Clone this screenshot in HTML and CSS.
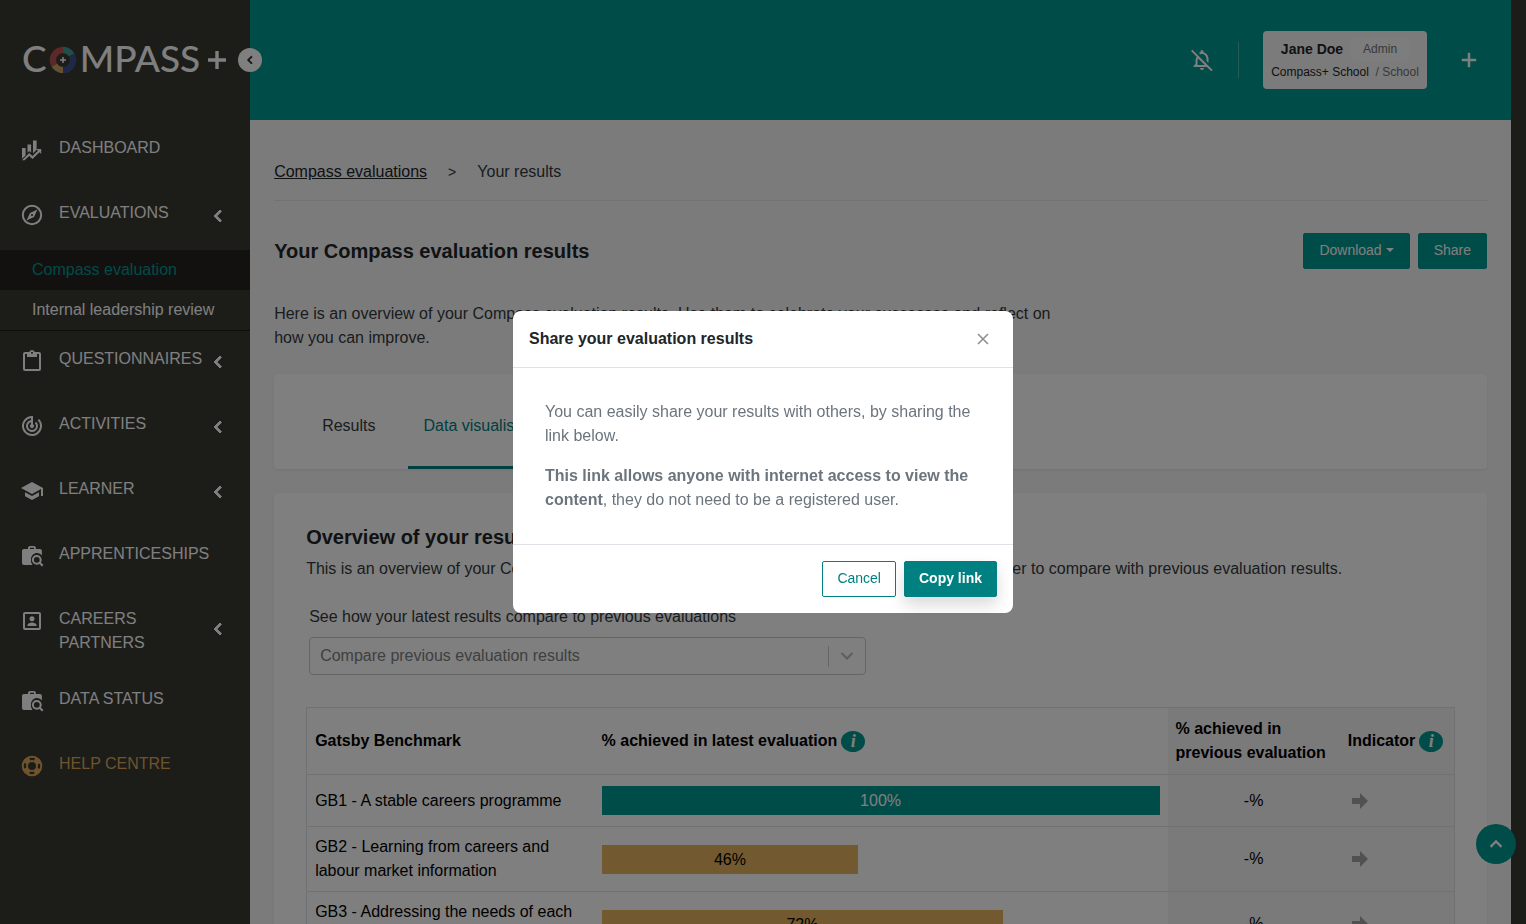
FILE: index.html
```html
<!DOCTYPE html>
<html lang="en">
<head>
    <meta charset="UTF-8">
    <meta name="viewport" content="width=device-width, initial-scale=1.0">
    <title>Compass+ | Your results</title>
    <link rel="stylesheet" href="styles.css">
</head>
<body class="modal-open">

    <!-- icons used more than once -->
    <svg class="sprite" aria-hidden="true">
        <symbol id="icon-chevron" viewBox="0 0 24 24"><path d="M15.4 7.4 14 6l-6 6 6 6 1.4-1.4L10.8 12z"/></symbol>
        <symbol id="icon-case" viewBox="0 0 24 24"><path d="M11 15c0-3.3 2.7-6 6-6 2 0 3.800 1 4.900 2.500V7c0-1.100-.9-2-2-2h-4V4c0-1.100-.9-2-2-2H10C8.900 2 8 2.900 8 4v1H4C2.900 5 2 5.900 2 7v12c0 1.100.9 2 2 2h8.500A6.500 6.500 0 0 1 11 15zM10 3.800h4V5h-4z"/><path d="M20.900 18.500a4.900 4.900 0 1 0-1.500 1.500l2.600 2.600 1.500-1.500zM16.800 18.700a2.900 2.900 0 1 1 0-5.800 2.900 2.900 0 0 1 0 5.800z"/></symbol>
        <symbol id="icon-arrow" viewBox="0 0 16 16"><path d="M0 5h8V0l8 8-8 8v-5H0z"/></symbol>
    </svg>

    <aside class="sidebar">
        <div class="logo">
            <span>C</span>
            <svg class="logo-ring" viewBox="0 0 28 28" fill="none" stroke-width="6.500">
                <path d="M14 4a10 10 0 0 1 8.700 5" stroke="#3f9c97"/>
                <path d="M22.700 9A10 10 0 0 1 14 24" stroke="#3f5088"/>
                <path d="M14 24A10 10 0 0 1 5.300 19" stroke="#c9a064"/>
                <path d="M5.300 19A10 10 0 0 1 14 4" stroke="#b45250"/>
                <path d="M14 11v6M11 14h6" stroke="#fff" stroke-width="1.500"/>
            </svg>
            <span>MPASS</span>
            <svg class="logo-plus" viewBox="0 0 18 18"><path d="M7.300 0h3.400v7.300H18v3.400h-7.300V18H7.300v-7.300H0V7.300h7.300z"/></svg>
        </div>
        <button class="collapse" aria-label="Collapse menu"><svg viewBox="0 0 24 24"><use href="#icon-chevron"/></svg></button>

        <nav class="menu">
            <a class="menu-item" href="#">
                <svg class="icon" viewBox="0 0 24 24"><path d="M2 10h3.600v7.500L2 20.800zM7.500 6.500h3.600v8.300L9.200 13l-1.700 1.700zM13 2.500h3.600v9.300L13 15.400z"/><path d="M2 22.300h2.600l4.600-4.400 3.300 3 7-6.700 1.700 1.700V11h-5l1.700 1.700-5.400 5.200L9.200 15z"/></svg>
                <span class="menu-text">DASHBOARD</span>
            </a>
            <a class="menu-item" href="#">
                <svg class="icon" viewBox="0 0 24 24"><path d="M12 1.800a10.200 10.200 0 1 0 0 20.400 10.200 10.200 0 0 0 0-20.400zm0 18.400a8.200 8.200 0 1 1 0-16.400 8.200 8.200 0 0 1 0 16.400z"/><path fill-rule="evenodd" d="m6.500 17.500 7.500-3.500 3.500-7.500-7.500 3.500zM12 10.900a1.100 1.100 0 1 1 0 2.200 1.100 1.100 0 0 1 0-2.200z"/></svg>
                <span class="menu-text">EVALUATIONS</span>
                <svg class="arrow"><use href="#icon-chevron"/></svg>
            </a>
            <div class="submenu">
                <a class="submenu-item active" href="#">Compass evaluation</a>
                <a class="submenu-item" href="#">Internal leadership review</a>
            </div>
            <a class="menu-item" href="#">
                <svg class="icon" viewBox="0 0 24 24"><path d="M19 3h-4.200a3 3 0 0 0-5.600 0H5a2 2 0 0 0-2 2v15a2 2 0 0 0 2 2h14a2 2 0 0 0 2-2V5a2 2 0 0 0-2-2zm-7-.3a1 1 0 1 1 0 2 1 1 0 0 1 0-2zM19 20H5V5h2v3h10V5h2z"/></svg>
                <span class="menu-text">QUESTIONNAIRES</span>
                <svg class="arrow"><use href="#icon-chevron"/></svg>
            </a>
            <a class="menu-item" href="#">
                <svg class="icon" viewBox="0 0 24 24"><path d="m19.070 4.930-1.410 1.410A8 8 0 1 1 11 4.070v2.020a6 6 0 1 0 5.240 1.670l-1.410 1.410A4 4 0 1 1 11 8.140v2.140a2 2 0 1 0 2 0V2h-1a10 10 0 1 0 7.070 2.930z"/></svg>
                <span class="menu-text">ACTIVITIES</span>
                <svg class="arrow"><use href="#icon-chevron"/></svg>
            </a>
            <a class="menu-item" href="#">
                <svg class="icon" viewBox="0 0 24 24"><path d="M5 13.200v4L12 21l7-3.800v-4L12 17zM12 3 1 9l11 6 9-4.900V17h2V9z"/></svg>
                <span class="menu-text">LEARNER</span>
                <svg class="arrow"><use href="#icon-chevron"/></svg>
            </a>
            <a class="menu-item" href="#">
                <svg class="icon"><use href="#icon-case"/></svg>
                <span class="menu-text">APPRENTICESHIPS</span>
            </a>
            <a class="menu-item" href="#">
                <svg class="icon" viewBox="0 0 24 24"><path d="M19 3H5a2 2 0 0 0-2 2v14a2 2 0 0 0 2 2h14a2 2 0 0 0 2-2V5a2 2 0 0 0-2-2zm0 16H5V5h14z"/><circle cx="12" cy="9.800" r="2.500"/><path d="M7.500 17v-.8c0-1.700 3-2.600 4.500-2.600s4.500.9 4.500 2.600v.8z"/></svg>
                <span class="menu-text">CAREERS PARTNERS</span>
                <svg class="arrow"><use href="#icon-chevron"/></svg>
            </a>
            <a class="menu-item" href="#">
                <svg class="icon"><use href="#icon-case"/></svg>
                <span class="menu-text">DATA STATUS</span>
            </a>
            <a class="menu-item help" href="#">
                <svg class="icon" viewBox="0 0 24 24" fill="none"><circle cx="12" cy="12" r="9.300" stroke="currentColor" stroke-width="2"/><circle cx="12" cy="12" r="5" stroke="currentColor" stroke-width="2"/><circle cx="12" cy="12" r="7.300" stroke="currentColor" stroke-width="4.500" stroke-dasharray="6.500 4.967" stroke-dashoffset="-2.500"/></svg>
                <span class="menu-text">HELP CENTRE</span>
            </a>
        </nav>
    </aside>

    <div class="page">
        <header class="topbar">
            <button class="icon-button" aria-label="Notifications off">
                <svg viewBox="0 0 24 24"><path d="M12 22a2 2 0 0 0 2-2h-4a2 2 0 0 0 2 2zM12 6c2.500 0 4.500 2.200 4.500 5v2.100l2 2V11c0-3.300-1.700-5.900-5-6.700V3.500a1.500 1.500 0 0 0-3 0v.8c-.6.100-1.100.300-1.600.6l1.500 1.500C10.900 6.100 11.400 6 12 6zM2.400 1.700 1 3.100l5.700 5.700C5.900 10 5.500 11.400 5.500 13v3l-2 2v1h13.400l4.400 4.300 1.400-1.400zM7.500 17v-4c0-.9.200-1.800.6-2.600l6.700 6.600z"/></svg>
            </button>
            <div class="divider"></div>
            <div class="user">
                <div class="user-row"><strong class="user-name">Jane Doe</strong><span class="role">Admin</span></div>
                <div class="school">Compass+ School&nbsp; <span class="school-type">/ School</span></div>
            </div>
            <button class="icon-button add" aria-label="Add">
                <svg viewBox="0 0 24 24"><path d="M11 5h2v6h6v2h-6v6h-2v-6H5v-2h6z"/></svg>
            </button>
        </header>

        <main class="content">
            <nav class="breadcrumb">
                <a href="#">Compass evaluations</a>
                <span class="separator">&gt;</span>
                <span>Your results</span>
            </nav>

            <div class="title-row">
                <h1>Your Compass evaluation results</h1>
                <div class="actions">
                    <button class="btn">Download<span class="caret"></span></button>
                    <button class="btn">Share</button>
                </div>
            </div>

            <p class="intro">Here is an overview of your Compass evaluation results. Use them to celebrate your successes and reflect on how you can improve.</p>

            <div class="card tabs">
                <a class="tab" href="#">Results</a>
                <a class="tab active" href="#">Data visualisation</a>
            </div>

            <section class="card results">
                <h2>Overview of your results</h2>
                <p class="summary">This is an overview of your Compass evaluation results. You can select your evaluation below in order to compare with previous evaluation results.</p>

                <div class="compare">
                    <label for="compare">See how your latest results compare to previous evaluations</label>
                    <div class="select-box">
                        <select id="compare">
                            <option>Compare previous evaluation results</option>
                        </select>
                        <svg class="select-arrow" viewBox="0 0 38 24" fill="none"><path d="M.5 2v21" stroke="#ccc"/><path d="m14 9.500 5 5 5-5" stroke="#bbb" stroke-width="2" stroke-linecap="round"/></svg>
                    </div>
                </div>

                <table class="benchmarks">
                    <colgroup>
                        <col class="col-name">
                        <col class="col-latest">
                        <col class="col-previous">
                        <col class="col-indicator">
                    </colgroup>
                    <thead>
                        <tr>
                            <th>Gatsby Benchmark</th>
                            <th><span class="with-info">% achieved in latest evaluation <i class="info">i</i></span></th>
                            <th class="shaded">% achieved in previous evaluation</th>
                            <th class="shaded"><span class="with-info">Indicator <i class="info">i</i></span></th>
                        </tr>
                    </thead>
                    <tbody>
                        <tr>
                            <td>GB1 - A stable careers programme</td>
                            <td><div class="bar full" style="width: 100%">100%</div></td>
                            <td class="shaded previous">-%</td>
                            <td class="shaded"><svg class="same"><use href="#icon-arrow"/></svg></td>
                        </tr>
                        <tr>
                            <td>GB2 - Learning from careers and labour market information</td>
                            <td><div class="bar" style="width: 46%">46%</div></td>
                            <td class="shaded previous">-%</td>
                            <td class="shaded"><svg class="same"><use href="#icon-arrow"/></svg></td>
                        </tr>
                        <tr>
                            <td>GB3 - Addressing the needs of each pupil</td>
                            <td><div class="bar" style="width: 72%">72%</div></td>
                            <td class="shaded previous">-%</td>
                            <td class="shaded"><svg class="same"><use href="#icon-arrow"/></svg></td>
                        </tr>
                    </tbody>
                </table>
            </section>
        </main>
    </div>

    <button class="to-top" aria-label="Back to top"><svg viewBox="0 0 24 24"><path d="m7.400 15.400 4.600-4.600 4.600 4.600L18 14l-6-6-6 6z"/></svg></button>

    <div class="backdrop">
        <div class="modal" role="dialog" aria-labelledby="modal-title">
            <div class="modal-header">
                <h2 id="modal-title">Share your evaluation results</h2>
                <button class="close" aria-label="Close"><svg viewBox="0 0 12 12"><path d="m1 1 10 10M11 1 1 11"/></svg></button>
            </div>
            <div class="modal-body">
                <p>You can easily share your results with others, by sharing the link below.</p>
                <p><strong>This link allows anyone with internet access to view the content</strong>, they do not need to be a registered user.</p>
            </div>
            <div class="modal-footer">
                <button class="btn outline">Cancel</button>
                <button class="btn primary">Copy link</button>
            </div>
        </div>
    </div>

</body>
</html>
```

FILE: styles.css
```css
* {
    box-sizing: border-box;
}

body {
    margin: 0;
    display: flex;
    background: #383833;
    color: #343a40;
    font-family: Arial, "Liberation Sans", sans-serif;
    font-size: 16px;
    line-height: 24px;
}

/* page is locked while the modal is open, padding replaces the scrollbar */
body.modal-open {
    height: 100vh;
    overflow: hidden;
    padding-right: 15px;
}

h1, h2, p {
    margin: 0;
}

h1, h2 {
    font-size: 20px;
    color: #212529;
}

a {
    color: inherit;
    text-decoration: none;
}

button {
    font-family: inherit;
    cursor: pointer;
}

svg {
    fill: currentColor;
    flex-shrink: 0;
}

svg[fill="none"] {
    fill: none;
}

.sprite {
    position: absolute;
    width: 0;
    height: 0;
}

/* Sidebar */
.sidebar {
    position: relative;
    flex: 0 0 250px;
    background: #383833;
    color: #fff;
    z-index: 1;
}

.logo {
    height: 120px;
    padding-left: 22px;
    display: flex;
    align-items: center;
    font-family: Lato, sans-serif;
    font-size: 37px;
    font-weight: 500;
}

.logo span {
    padding-bottom: 4px;
}

.logo-ring {
    width: 28px;
    height: 28px;
    margin: 0 3px 0 2px;
}

.logo-plus {
    width: 18px;
    height: 18px;
    margin-left: 8px;
}

.collapse {
    position: absolute;
    top: 48px;
    right: -12px;
    width: 24px;
    height: 24px;
    padding: 4px;
    border: none;
    border-radius: 50%;
    background: #fff;
    color: #222;
}

.collapse svg {
    display: block;
    width: 16px;
    height: 16px;
    stroke: currentColor;
}

.menu-item {
    display: flex;
    align-items: flex-start;
    min-height: 65px;
    padding: 16px 20px;
}

.icon {
    width: 24px;
    height: 24px;
    margin: 2px 15px 0 0;
}

.menu-text {
    flex: 0 1 145px;
}

.arrow {
    align-self: center;
    width: 24px;
    height: 24px;
    margin: 0 0 4px 4px;
    stroke: currentColor;
}

.help {
    color: #dca75a;
}

.submenu {
    border-bottom: 1px solid #1c1c19;
}

.submenu-item {
    display: block;
    padding: 8px 32px;
}

.submenu-item.active {
    background: #242320;
    color: #009890;
}

/* Top bar */
.page {
    flex: 1;
    min-width: 0;
    background: #f7f7f7;
}

.topbar {
    height: 120px;
    padding-right: 30px;
    display: flex;
    align-items: center;
    justify-content: flex-end;
    background: #009890;
    color: #fff;
}

.icon-button {
    width: 24px;
    height: 24px;
    padding: 0;
    border: none;
    background: none;
    color: #fff;
}

.icon-button svg {
    display: block;
}

.divider {
    width: 1px;
    height: 36px;
    margin: 0 24px;
    background: #4db7b1;
}

.user {
    width: 164px;
    height: 58px;
    padding: 7px 8px;
    border-radius: 4px;
    background: #f7f7f7;
    color: #212529;
    font-size: 12px;
    text-align: center;
    white-space: nowrap;
}

.user-row {
    display: flex;
    justify-content: center;
    align-items: center;
    gap: 8px;
    height: 22px;
}

.user-name {
    font-size: 14px;
}

.role {
    padding: 0 12px;
    border-radius: 4px;
    background: #fafafa;
    color: #6c757d;
}

.school-type {
    color: #6c757d;
}

.add {
    margin-left: 30px;
}

.add svg {
    stroke: currentColor;
    stroke-width: 0.5;
}

/* Content */
.content {
    padding: 0 24px;
}

.breadcrumb {
    display: flex;
    gap: 21px;
    padding: 40px 0 16px;
    border-bottom: 1px solid #e6e6e6;
}

.breadcrumb a {
    color: #212529;
    text-decoration: underline;
}

.separator {
    font-size: 14px;
}

.title-row {
    display: flex;
    justify-content: space-between;
    align-items: center;
    padding: 32px 0 33px;
}

.actions {
    display: flex;
    gap: 8px;
}

.btn {
    padding: 5px 15px 7px;
    border: 1px solid #009890;
    border-radius: 2px;
    background: #009890;
    color: #fff;
    font-size: 14px;
    line-height: 22px;
}

.caret {
    display: inline-block;
    margin-left: 4px;
    vertical-align: 3px;
    border: 4px solid transparent;
    border-top-color: currentColor;
    border-bottom: none;
}

.intro {
    max-width: 800px;
    margin-bottom: 24px;
}

.card {
    border-radius: 4px;
    background: #fff;
    box-shadow: 0 1px 3px rgba(0, 0, 0, 0.08);
}

.tabs {
    display: flex;
    padding: 24px 32px 0;
    margin-bottom: 24px;
}

.tab {
    padding: 16px 16px 28px;
    border-bottom: 3px solid transparent;
    margin-right: 16px;
}

.tab.active {
    border-color: #008080;
    color: #008080;
}

.results {
    padding: 32px;
}

.summary {
    margin-top: 8px;
}

.compare {
    max-width: 557px;
    margin: 24px 3px 32px;
}

.select-box {
    position: relative;
    margin-top: 8px;
}

.select-box select {
    display: block;
    width: 100%;
    height: 38px;
    padding: 0 10px 2px;
    border: 1px solid #ccc;
    border-radius: 4px;
    background: #fff;
    color: #808080;
    font-family: inherit;
    font-size: 16px;
    appearance: none;
}

.select-arrow {
    position: absolute;
    top: 7px;
    right: 0;
    width: 38px;
    height: 24px;
    pointer-events: none;
}

/* Benchmarks table */
.benchmarks {
    width: 100%;
    table-layout: fixed;
    border-collapse: collapse;
    border: 1px solid #dee2e6;
    color: #000;
}

.col-name {
    width: 25%;
}

.col-latest {
    width: 50%;
}

.col-previous {
    width: 15%;
}

.col-indicator {
    width: 10%;
}

.benchmarks th,
.benchmarks td {
    padding: 8px;
    text-align: left;
    border-bottom: 1px solid #dee2e6;
}

.benchmarks th {
    height: 67px;
}

.benchmarks td {
    height: 52px;
}

.benchmarks .shaded {
    background: #f4f4f4;
}

.benchmarks .previous {
    text-align: center;
}

.with-info {
    display: flex;
    align-items: center;
    gap: 4px;
    white-space: nowrap;
}

.info {
    width: 24px;
    height: 21px;
    border-radius: 50%;
    background: #009890;
    color: #fff;
    font-family: "Liberation Serif", serif;
    font-size: 18px;
    line-height: 20px;
    text-align: center;
}

.bar {
    height: 29px;
    line-height: 29px;
    background: #e6b35e;
    text-align: center;
}

.bar.full {
    background: #009890;
    color: #fff;
}

.same {
    display: block;
    width: 16px;
    height: 16px;
    margin-left: 4px;
    color: #a3a3a3;
}

.to-top {
    position: fixed;
    right: 10px;
    bottom: 60px;
    width: 40px;
    height: 40px;
    padding: 8px;
    border: none;
    border-radius: 50%;
    background: #009890;
    color: #fff;
}

.to-top svg {
    display: block;
    width: 24px;
    height: 24px;
    stroke: currentColor;
    stroke-width: 0.5;
}

/* Share modal */
.backdrop {
    position: fixed;
    inset: 0;
    z-index: 10;
    display: flex;
    align-items: center;
    justify-content: center;
    background: rgba(0, 0, 0, 0.5);
}

.modal {
    width: 500px;
    max-width: 100%;
    border-radius: 8px;
    background: #fff;
    color: #6c757d;
}

.modal-header {
    display: flex;
    justify-content: space-between;
    align-items: center;
    padding: 16px 24px 16px 16px;
    border-bottom: 1px solid #dee2e6;
}

.modal-header h2 {
    font-size: 16px;
}

.close {
    padding: 0;
    border: none;
    background: none;
}

.close svg {
    display: block;
    width: 12px;
    height: 12px;
    stroke: #8c8c8c;
    stroke-width: 1.5;
}

.modal-body {
    display: flex;
    flex-direction: column;
    gap: 16px;
    padding: 32px;
}

.modal-footer {
    display: flex;
    justify-content: flex-end;
    gap: 8px;
    padding: 16px;
    border-top: 1px solid #dee2e6;
}

.modal-footer .btn {
    padding-left: 14px;
    padding-right: 14px;
}

.btn.outline {
    background: #fff;
    border-color: #008080;
    color: #008080;
}

.btn.primary {
    background: #008080;
    border-color: #008080;
    font-weight: bold;
    box-shadow: 0 8px 16px rgba(0, 0, 0, 0.15);
}
```
